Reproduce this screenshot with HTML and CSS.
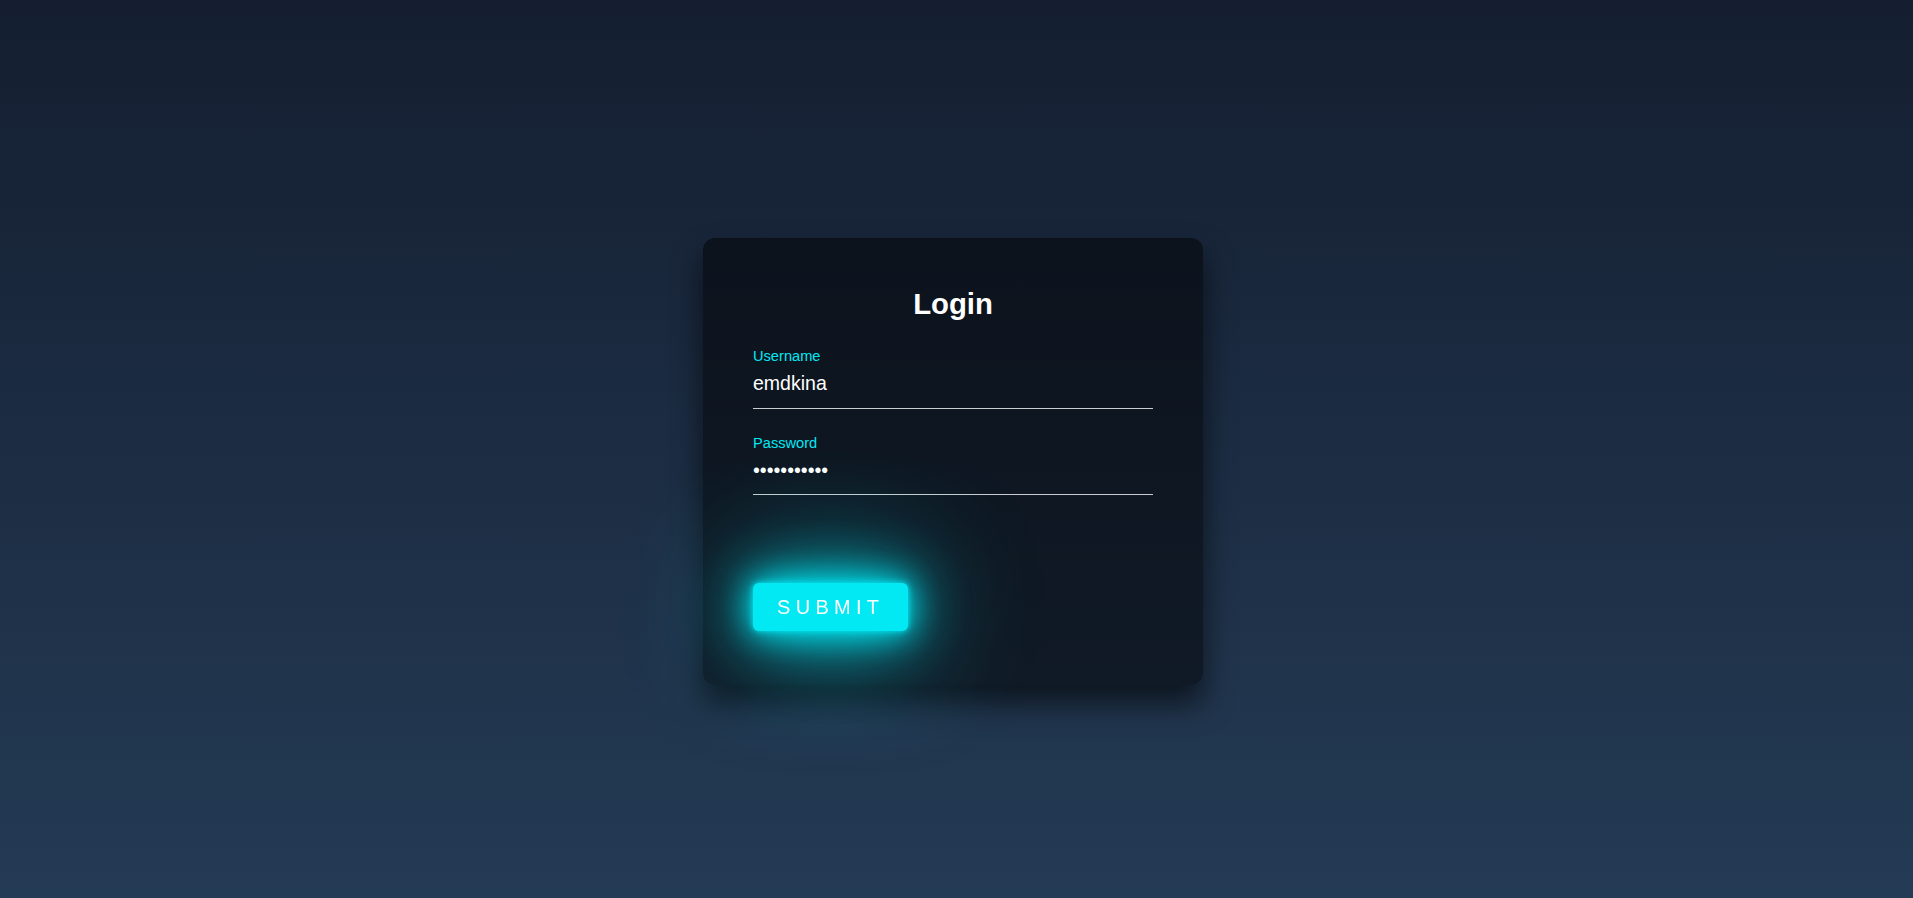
FILE: index.html
```html
<!DOCTYPE html>
<html lang="en">
<head>
<meta charset="utf-8">
<title>Login</title>
<link rel="stylesheet" href="styles.css">
</head>
<body>
<main class="page">
  <div class="login-box">
    <h2 class="login-title">Login</h2>
    <form class="login-form" onsubmit="return false">
      <div class="user-box">
        <label class="field-label" for="username">Username</label>
        <input class="field-input" id="username" type="text" value="emdkina">
      </div>
      <div class="user-box user-box-second">
        <label class="field-label" for="password">Password</label>
        <input class="field-input" id="password" type="password" value="abcdefghijk" autofocus>
      </div>
      <a href="#" class="submit-btn">Submit</a>
    </form>
  </div>
</main>
<script src="script.js"></script>
</body>
</html>
```

FILE: styles.css
```css
* {
  box-sizing: border-box;
}

html,
body {
  margin: 0;
  height: 100%;
}

body {
  font-family: "Liberation Sans", Arial, sans-serif;
  background: linear-gradient(#141e30, #243b55);
}

.page {
  display: flex;
  justify-content: center;
  align-items: flex-start;
  min-height: 100vh;
  padding: 238px 7px 0 0;
}

.login-box {
  width: 500px;
  padding: 49px 50px 54px;
  background: rgba(0, 0, 0, 0.5);
  border-radius: 12px;
  box-shadow: 0 18px 30px rgba(0, 0, 0, 0.6);
}

.login-title {
  margin: 0 0 27px;
  font-size: 29.3px;
  line-height: 34px;
  font-weight: 700;
  color: #fff;
  text-align: center;
}

.login-form {
  display: flex;
  flex-direction: column;
  align-items: flex-start;
}

.user-box {
  display: flex;
  flex-direction: column;
  width: 100%;
}

.user-box-second {
  margin-top: 26px;
}

.field-label {
  font-size: 14.64px;
  line-height: 17px;
  color: #03e9f4;
}

.field-input {
  width: 100%;
  height: 44px;
  padding: 0 0 6px;
  margin: 0;
  border: 0;
  border-bottom: 1px solid #c9ccd1;
  background: transparent;
  color: #fff;
  font-family: "Liberation Sans", Arial, sans-serif;
  font-size: 19.52px;
  outline: none;
  caret-color: #fff;
}

.user-box-second .field-input {
  height: 43px;
  padding-bottom: 5px;
}

.submit-btn {
  display: inline-block;
  margin-top: 88px;
  padding: 12px 24px;
  font-size: 20px;
  line-height: 24px;
  letter-spacing: 5.3px;
  text-transform: uppercase;
  text-decoration: none;
  color: #fff;
  background: #03e9f4;
  border-radius: 6px;
  box-shadow: 0 0 6px #03e9f4, 0 0 30px #03e9f4, 0 0 61px #03e9f4, 0 0 122px #03e9f4;
}
```

FILE: script.js
```js
var pw = document.getElementById('password');
pw.focus();
pw.setSelectionRange(pw.value.length, pw.value.length);
```
